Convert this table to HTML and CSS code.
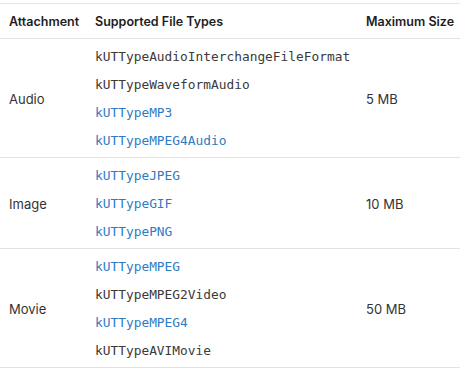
FILE: index.html
```html
<!DOCTYPE html>
<html>
<head>
<meta charset="utf-8">
<link rel="stylesheet" href="styles.css">
</head>
<body>
<table class="types">
  <thead>
    <tr>
      <th class="c1">Attachment</th>
      <th class="c2">Supported File Types</th>
      <th class="c3">Maximum Size</th>
    </tr>
  </thead>
  <tbody>
    <tr>
      <td class="c1">Audio</td>
      <td class="c2">
        <div class="code">kUTTypeAudioInterchangeFileFormat</div>
        <div class="code">kUTTypeWaveformAudio</div>
        <div class="code link">kUTTypeMP3</div>
        <div class="code link">kUTTypeMPEG4Audio</div>
      </td>
      <td class="c3">5 MB</td>
    </tr>
    <tr>
      <td class="c1">Image</td>
      <td class="c2">
        <div class="code link">kUTTypeJPEG</div>
        <div class="code link">kUTTypeGIF</div>
        <div class="code link">kUTTypePNG</div>
      </td>
      <td class="c3">10 MB</td>
    </tr>
    <tr>
      <td class="c1">Movie</td>
      <td class="c2">
        <div class="code link">kUTTypeMPEG</div>
        <div class="code">kUTTypeMPEG2Video</div>
        <div class="code link">kUTTypeMPEG4</div>
        <div class="code">kUTTypeAVIMovie</div>
      </td>
      <td class="c3">50 MB</td>
    </tr>
  </tbody>
</table>
</body>
</html>
```
FILE: styles.css
```css
html, body {
  margin: 0;
  padding: 0;
  background: #ffffff;
}
body {
  font-family: Inter, "Noto Sans", "Liberation Sans", sans-serif;
  color: #333333;
  font-size: 13px;
}
.types {
  margin-top: 3px;
  width: 460px;
  border-collapse: collapse;
  table-layout: fixed;
}
.types th,
.types td {
  text-align: left;
  vertical-align: middle;
  padding: 0;
  border-bottom: 1px solid #e2e2e2;
  white-space: nowrap;
}
.types thead th {
  border-top: 1px solid #e6e6e6;
  height: 34px;
  font-weight: 600;
  color: #1d1d1f;
  font-size: 12.5px;
}
.types tbody td {
  padding-top: 4px;
  padding-bottom: 2px;
}
.c1 {
  width: 77px;
  padding-left: 9px !important;
}
.c2 {
  width: 262px;
  padding-left: 9px !important;
}
.c3 {
  padding-left: 9px !important;
}
.code {
  font-family: "DejaVu Sans Mono", "Liberation Mono", monospace;
  font-size: 12.85px;
  line-height: 28px;
  color: #3a3a3a;
}
.code.link {
  color: #2f7bc3;
}
```
